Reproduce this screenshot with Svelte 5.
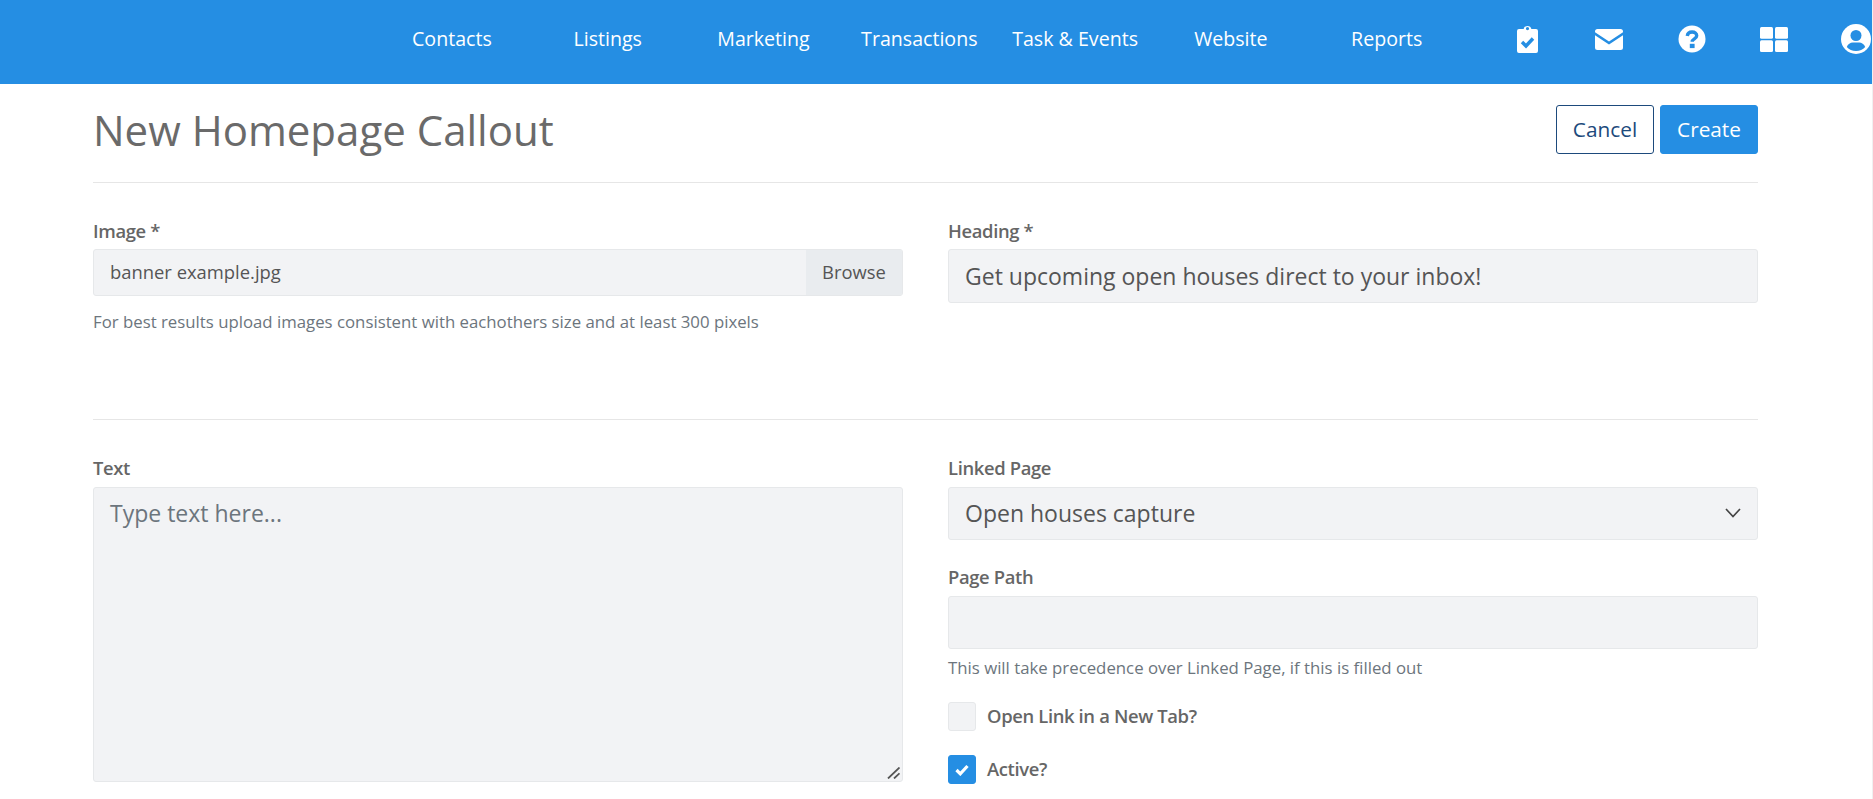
<script>
  const nav = ['Contacts', 'Listings', 'Marketing', 'Transactions', 'Task & Events', 'Website', 'Reports'];
</script>

<div class="page">
  <header class="topbar">
    <nav class="links">
      {#each nav as item}
        <a href="#top" class="link">{item}</a>
      {/each}
    </nav>
    <div class="icons">
      <span class="icon">
        <svg width="21" height="28" viewBox="0 0 21 28"><path fill="#fff" fill-rule="evenodd" d="M2 4h4.6a4 4 0 0 1 7.8 0H19a2 2 0 0 1 2 2v20a2 2 0 0 1-2 2H2a2 2 0 0 1-2-2V6a2 2 0 0 1 2-2zm8.5-2a1.6 1.6 0 1 0 0 3.2 1.6 1.6 0 0 0 0-3.2z"/><path fill="none" stroke="#258ee3" stroke-width="3.4" d="M5 17l4 4 7-7.500"/></svg>
      </span>
      <span class="icon">
        <svg width="28" height="21" viewBox="0 0 28 21"><path fill="#fff" d="M2.5 0h23A2.5 2.5 0 0 1 28 2.5v.7L14 12.4 0 3.200v-.7A2.500 2.500 0 0 1 2.500 0zM0 6.300l14 9.200 14-9.200v12.200a2.500 2.500 0 0 1-2.500 2.500h-23A2.500 2.500 0 0 1 0 18.500z"/></svg>
      </span>
      <span class="icon">
        <svg width="28" height="28" viewBox="0 0 28 28"><circle cx="14" cy="14" r="13.500" fill="#fff"/><path fill="none" stroke="#258ee3" stroke-width="3.400" d="M9.300 11c.3-2.600 2.300-4 4.800-4 2.700 0 4.600 1.500 4.600 3.700 0 3.300-4.500 3-4.500 6.100"/><rect x="11.800" y="18.800" width="4.800" height="4.300" fill="#258ee3"/></svg>
      </span>
      <span class="icon">
        <svg width="28" height="25" viewBox="0 0 28 25"><g fill="#fff"><rect width="13" height="11.700" rx="1.500"/><rect x="15" width="13" height="11.700" rx="1.500"/><rect y="13.300" width="13" height="11.700" rx="1.500"/><rect x="15" y="13.300" width="13" height="11.700" rx="1.500"/></g></svg>
      </span>
      <span class="icon">
        <svg width="30" height="30" viewBox="0 0 30 30"><circle cx="15" cy="15" r="15" fill="#fff"/><circle cx="15" cy="11.500" r="5.500" fill="#258ee3"/><path fill="#258ee3" d="M5.800 23c1-3 3.600-4.600 6-4.600h6.400c2.400 0 5 1.600 6 4.600-2.300 2.500-5.500 4-9.200 4s-6.900-1.500-9.200-4z"/></svg>
      </span>
    </div>
  </header>

  <main class="content">
    <div class="titlebar">
      <h1>New Homepage Callout</h1>
      <div class="actions">
        <button class="btn outline">Cancel</button>
        <button class="btn primary">Create</button>
      </div>
    </div>

    <div class="row first">
      <div class="field">
        <span class="label">Image *</span>
        <div class="file">
          <span class="filename">banner example.jpg</span>
          <span class="browse">Browse</span>
        </div>
        <p class="help">For best results upload images consistent with eachothers size and at least 300 pixels</p>
      </div>
      <div class="field">
        <span class="label">Heading *</span>
        <input class="control" value="Get upcoming open houses direct to your inbox!" />
      </div>
    </div>

    <div class="row second">
      <div class="field">
        <span class="label">Text</span>
        <div class="areawrap">
          <textarea class="control area" placeholder="Type text here..."></textarea>
          <svg class="grip" width="13" height="12" viewBox="0 0 13 12"><path fill="none" stroke="#555" stroke-width="1.800" d="M1 11.500L12.500 .5M7 11.500l5.500-5.200"/></svg>
        </div>
      </div>
      <div class="field">
        <span class="label">Linked Page</span>
        <div class="selectbox">
          <span>Open houses capture</span>
          <svg width="16" height="10" viewBox="0 0 16 10"><path fill="none" stroke="#444" stroke-width="1.700" d="M1 1l7 7.500L15 1"/></svg>
        </div>
        <span class="label path">Page Path</span>
        <input class="control short" />
        <p class="help tight">This will take precedence over Linked Page, if this is filled out</p>
        <div class="check one">
          <span class="box"></span>
          <span class="label flat">Open Link in a New Tab?</span>
        </div>
        <div class="check two">
          <span class="box on">
            <svg width="14" height="12" viewBox="0 0 14 12"><path fill="none" stroke="#fff" stroke-width="3.200" d="M1.500 6l3.800 3.800L12.500 2"/></svg>
          </span>
          <span class="label flat">Active?</span>
        </div>
      </div>
    </div>
  </main>
</div>

<style>
  :global(body) {
    margin: 0;
    background: #fff;
    overflow: hidden;
  }
  .page {
    height: 799px;
    overflow: hidden;
    font-family: "Open Sans", sans-serif;
    color: #666;
    border-right: 1px solid #f0f0f0;
    box-sizing: border-box;
  }
  .topbar {
    display: flex;
    align-items: flex-start;
    height: 84px;
    padding-left: 374px;
    background: #258ee3;
    box-sizing: border-box;
  }
  .links {
    display: flex;
    flex: none;
    width: 1092px;
  }
  .link {
    width: 155.800px;
    text-align: center;
    color: #fff;
    font-size: 19.6px;
    line-height: 24px;
    padding-top: 27px;
    text-decoration: none;
    white-space: nowrap;
  }
  .icons {
    display: flex;
    flex: none;
    margin-left: 20px;
  }
  .icon {
    width: 82.300px;
    height: 78px;
    display: flex;
    align-items: center;
    justify-content: center;
  }
  .content {
    padding: 21px 114px 0 93px;
  }
  .titlebar {
    display: flex;
    justify-content: space-between;
    align-items: center;
    height: 49px;
    padding-bottom: 28px;
    border-bottom: 1px solid #e6e6e6;
  }
  h1 {
    margin: 0;
    font-size: 42px;
    font-weight: 400;
    line-height: 49px;
    color: #6a6a6a;
  }
  .actions {
    display: flex;
    gap: 6px;
  }
  .btn {
    width: 98px;
    height: 49px;
    padding: 0 0 2px;
    font-family: inherit;
    font-size: 20.8px;
    border-radius: 3px;
    box-sizing: border-box;
  }
  .outline {
    background: #fff;
    border: 1px solid #1d4a7c;
    color: #1d4a7c;
  }
  .primary {
    background: #258ee3;
    border: 1px solid #258ee3;
    color: #fff;
  }
  .row {
    display: grid;
    grid-template-columns: 810px 810px;
    gap: 45px;
  }
  .first {
    padding: 36px 0 0;
    height: 237px;
    box-sizing: border-box;
    border-bottom: 1px solid #e6e6e6;
  }
  .second {
    padding-top: 36px;
  }
  .field {
    display: flex;
    flex-direction: column;
    align-items: stretch;
    min-width: 0;
  }
  .label {
    font-size: 18.4px;
    font-weight: 600;
    line-height: 24px;
    color: #666;
    margin-bottom: 6px;
    letter-spacing: -0.35px;
  }
  .second .label {
    margin-bottom: 7px;
  }
  .second .label.flat {
    margin: 0;
    padding-bottom: 2px;
  }
  .second .label.path {
    margin-top: 25px;
  }
  .file {
    display: flex;
    align-items: center;
    justify-content: space-between;
    height: 47px;
    background: #f2f3f5;
    border: 1px solid #e6e8ea;
    border-radius: 3px;
    box-sizing: border-box;
    overflow: hidden;
  }
  .filename {
    padding-left: 16px;
    font-size: 18.4px;
    color: #555;
    margin-top: -2px;
  }
  .browse {
    display: flex;
    align-items: center;
    justify-content: center;
    width: 96px;
    height: 100%;
    padding-bottom: 2px;
    box-sizing: border-box;
    background: #e9ecef;
    font-size: 18.4px;
    color: #555;
  }
  .help {
    margin: 15px 0 0;
    font-size: 16.8px;
    line-height: 22px;
    color: #6c757d;
  }
  .help.tight {
    margin-top: 8px;
  }
  .control {
    width: 100%;
    height: 54px;
    padding: 0 16px;
    font-family: inherit;
    font-size: 23px;
    color: #555;
    background: #f2f3f5;
    border: 1px solid #e6e8ea;
    border-radius: 3px;
    box-sizing: border-box;
    outline: none;
  }
  .control.short {
    height: 53px;
  }
  .areawrap {
    position: relative;
    height: 295px;
  }
  .area {
    display: block;
    height: 295px;
    padding: 9px 16px;
    line-height: 33px;
    resize: none;
  }
  .area::placeholder {
    color: #6c757d;
  }
  .grip {
    position: absolute;
    right: 3px;
    bottom: 3px;
  }
  .selectbox {
    display: flex;
    align-items: center;
    justify-content: space-between;
    height: 53px;
    padding: 0 16px 2px 16px;
    font-size: 23px;
    color: #555;
    background: #f2f3f5;
    border: 1px solid #e6e8ea;
    border-radius: 3px;
    box-sizing: border-box;
  }
  .check {
    display: flex;
    align-items: center;
    gap: 11px;
  }
  .check.one {
    margin-top: 23px;
  }
  .check.two {
    margin-top: 24px;
  }
  .box {
    display: flex;
    align-items: center;
    justify-content: center;
    width: 28px;
    height: 29px;
    background: #f2f3f5;
    border: 1px solid #e6e8ea;
    border-radius: 3px;
    box-sizing: border-box;
  }
  .box.on {
    background: #258ee3;
    border-color: #258ee3;
  }
</style>
